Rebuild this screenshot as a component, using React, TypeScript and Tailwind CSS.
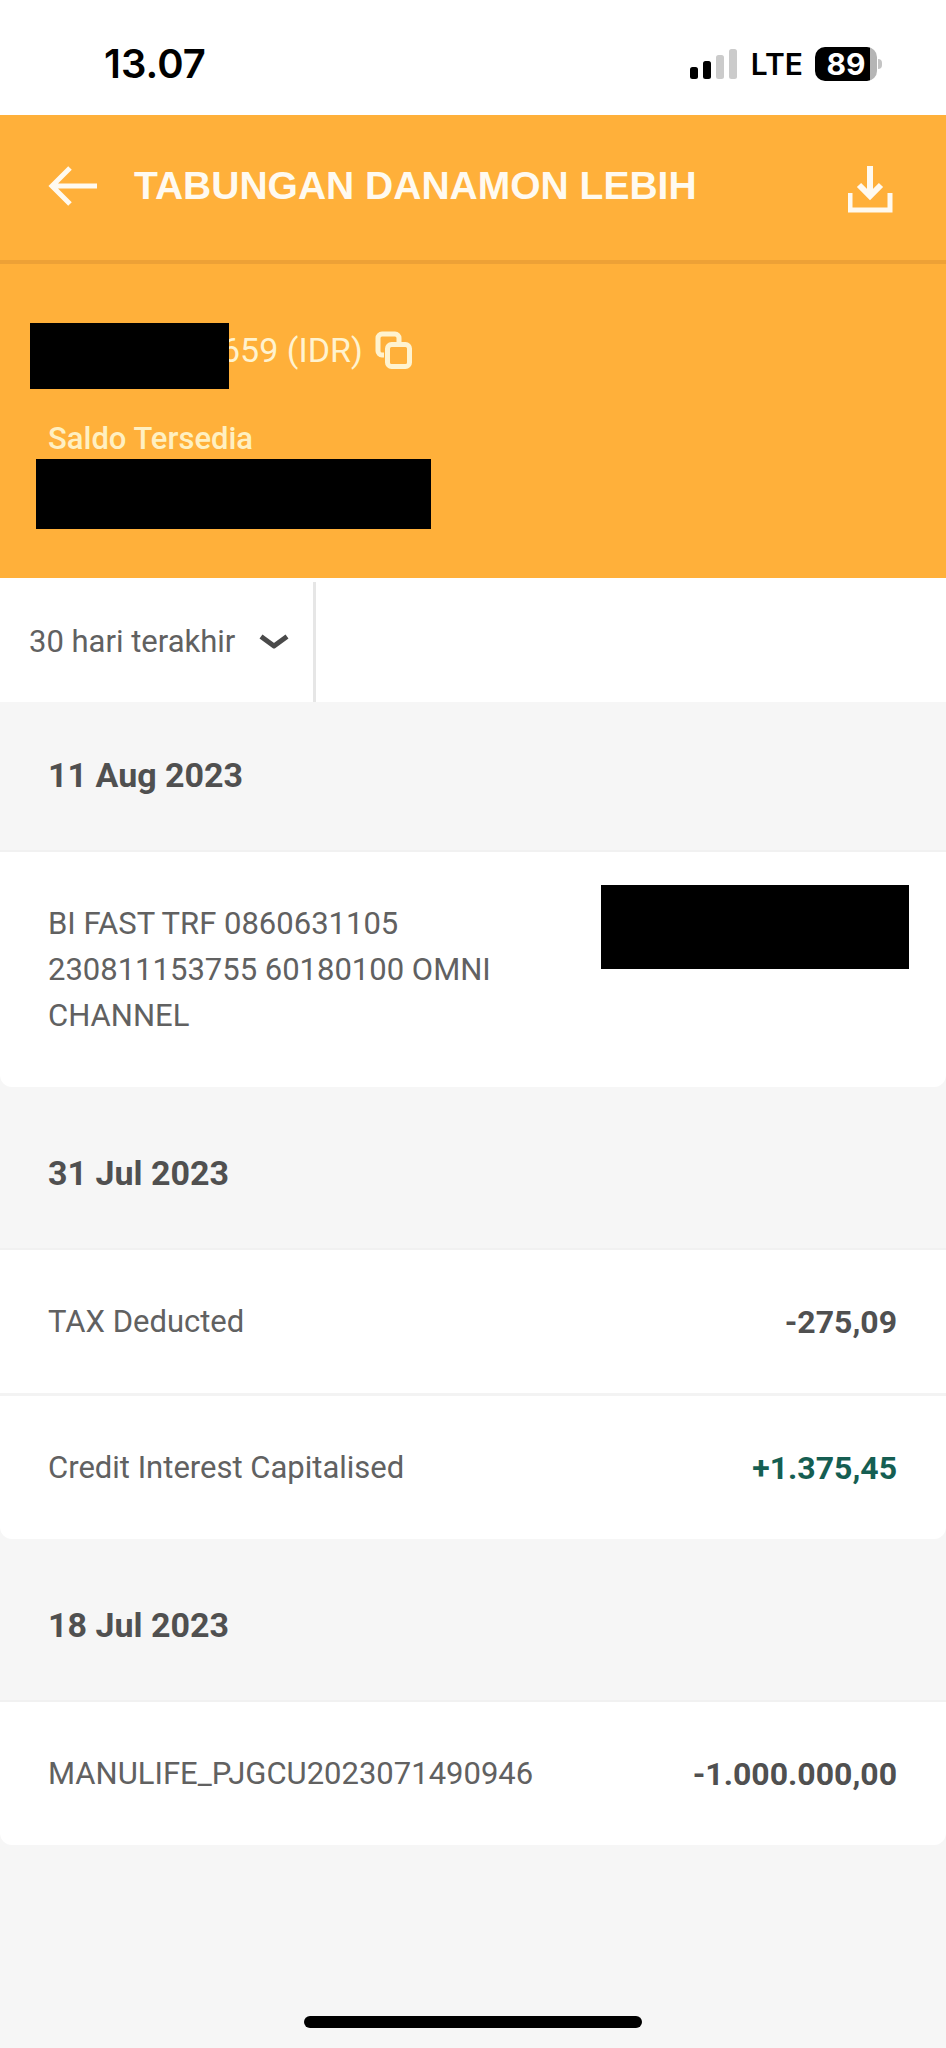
import type { ReactNode } from "react";

type Transaction = { label: string; amount?: string; credit?: boolean };
type Group = { date: string; items: Transaction[] };

const groups: Group[] = [
  {
    date: "11 Aug 2023",
    items: [{ label: "BI FAST TRF 0860631105 230811153755 60180100 OMNI CHANNEL" }],
  },
  {
    date: "31 Jul 2023",
    items: [
      { label: "TAX Deducted", amount: "-275,09" },
      { label: "Credit Interest Capitalised", amount: "+1.375,45", credit: true },
    ],
  },
  {
    date: "18 Jul 2023",
    items: [{ label: "MANULIFE_PJGCU2023071490946", amount: "-1.000.000,00" }],
  },
];

function StatusBar() {
  return (
    <div className="flex h-[115px] items-center justify-between bg-white pt-3 pr-[64px] pl-[104px] font-['Inter',sans-serif] text-black">
      <span className="text-[40px] leading-[48px] font-semibold">13.07</span>
      <div className="flex items-center gap-3">
        <svg className="h-[32px] w-[50px]" viewBox="0 0 50 32" aria-hidden="true">
          <rect x="1" y="19" width="8" height="12" rx="2.5" fill="#000" />
          <rect x="14" y="13" width="8" height="18" rx="2.5" fill="#000" />
          <rect x="27" y="7" width="8" height="24" rx="2.5" fill="#cbcbcb" />
          <rect x="40" y="1" width="8" height="30" rx="2.5" fill="#cbcbcb" />
        </svg>
        <span className="text-[30px] leading-[40px] font-semibold">LTE</span>
        <div className="flex items-center gap-px">
          <div className="flex h-[34px] w-[62px] items-center justify-center rounded-[10px] bg-linear-to-r from-black from-88% to-[#b5b5b5] to-88% text-[30px] leading-[34px] font-bold text-white">
            89
          </div>
          <div className="h-[10px] w-1 rounded-r-full bg-[#c4c4c4]" />
        </div>
      </div>
    </div>
  );
}

function Header() {
  return (
    <header className="flex h-[149px] items-center border-b-4 border-[#eda136] px-12 pb-1">
      <button type="button" aria-label="Kembali" className="shrink-0">
        <svg className="h-[40px] w-[50px]" viewBox="0 0 50 40" fill="none" stroke="#fffaf0" strokeWidth="5">
          <path d="M49 20H4M22 2L4 20l18 18" />
        </svg>
      </button>
      <h1 className="ml-9 flex-1 font-['Liberation_Sans',sans-serif] text-[39px] leading-[48px] font-bold text-[#fffaf0]">
        TABUNGAN DANAMON LEBIH
      </h1>
      <button type="button" aria-label="Unduh" className="shrink-0 pt-2">
        <svg className="h-[48px] w-[50px]" viewBox="0 0 50 48" fill="none" stroke="#fffaf0">
          <path d="M22 0v30M11 19l11 11 11-11" strokeWidth="6" />
          <path d="M2 27v17h40V27" strokeWidth="5" />
        </svg>
      </button>
    </header>
  );
}

function Account() {
  return (
    <section className="flex h-[314px] flex-col items-start pt-[59px]">
      <div className="flex items-center">
        <div className="z-10 ml-[30px] h-[66px] w-[199px] bg-black" />
        <span className="-ml-2 pb-3 text-[34px] leading-[40px] text-[#fff3cf]">659 (IDR)</span>
        <button type="button" aria-label="Salin nomor rekening" className="ml-3 pb-3">
          <svg className="h-[38px] w-[38px]" viewBox="0 0 38 38" fill="none" stroke="#fff3cf" strokeWidth="5">
            <rect x="12.500" y="13.500" width="22" height="22" rx="4" />
            <path d="M9 24H7a4 4 0 0 1-4-4V7a4 4 0 0 1 4-4h13a4 4 0 0 1 4 4v4" />
          </svg>
        </button>
      </div>
      <p className="mt-[30px] ml-12 text-[31px] leading-[40px] font-medium text-[#fff0c2]">Saldo Tersedia</p>
      <div className="ml-9 h-[70px] w-[395px] bg-black" />
    </section>
  );
}

function Filter() {
  return (
    <div className="flex h-[124px] bg-white">
      <div className="relative mt-1 flex w-[316px] items-center border-r-3 border-[#e6e6e6]">
        <select
          aria-label="Periode"
          className="h-full w-full appearance-none bg-transparent pl-[29px] text-[31px] text-[#616161] outline-none"
        >
          <option>30 hari terakhir</option>
        </select>
        <svg
          className="pointer-events-none absolute right-6 h-[16px] w-[30px]"
          viewBox="0 0 30 16"
          fill="none"
          stroke="#4a4a4a"
          strokeWidth="5"
        >
          <path d="M2 2.500L15 12L28 2.500" strokeLinejoin="round" />
        </svg>
      </div>
    </div>
  );
}

function Row({ label, children }: { label: string; children: ReactNode }) {
  return (
    <li className="flex items-start justify-between pt-[49px] pr-[49px] pb-12 pl-12">
      <span className="max-w-[480px] text-[31px] leading-[46px] text-[#616161]">{label}</span>
      {children}
    </li>
  );
}

export default function App() {
  return (
    <div className="flex min-h-screen flex-col bg-[#f6f6f6] font-['Roboto',sans-serif]">
      <StatusBar />
      <div className="bg-[#ffb03a]">
        <Header />
        <Account />
      </div>
      <Filter />
      <main>
        {groups.map((group) => (
          <section key={group.date} className="group">
            <h2 className="border-b-2 border-[#f1f1f1] pt-16 pb-[53px] pl-12 text-[34px] leading-[44px] font-bold text-[#505050] group-first:pt-[51px]">
              {group.date}
            </h2>
            <ul className="divide-y-3 divide-[#f3f3f3] rounded-b-xl bg-white">
              {group.items.map((item) => (
                <Row key={item.label} label={item.label}>
                  {item.amount ? (
                    <span
                      className={
                        item.credit
                          ? "text-[32px] leading-[46px] font-bold text-[#155e52]"
                          : "text-[32px] leading-[46px] font-bold text-[#505050]"
                      }
                    >
                      {item.amount}
                    </span>
                  ) : (
                    <span className="-mt-4 -mr-3 h-[84px] w-[308px] bg-black" />
                  )}
                </Row>
              ))}
            </ul>
          </section>
        ))}
      </main>
      <div className="mx-auto mt-auto mb-5 h-[12px] w-[338px] rounded-full bg-black" />
    </div>
  );
}
